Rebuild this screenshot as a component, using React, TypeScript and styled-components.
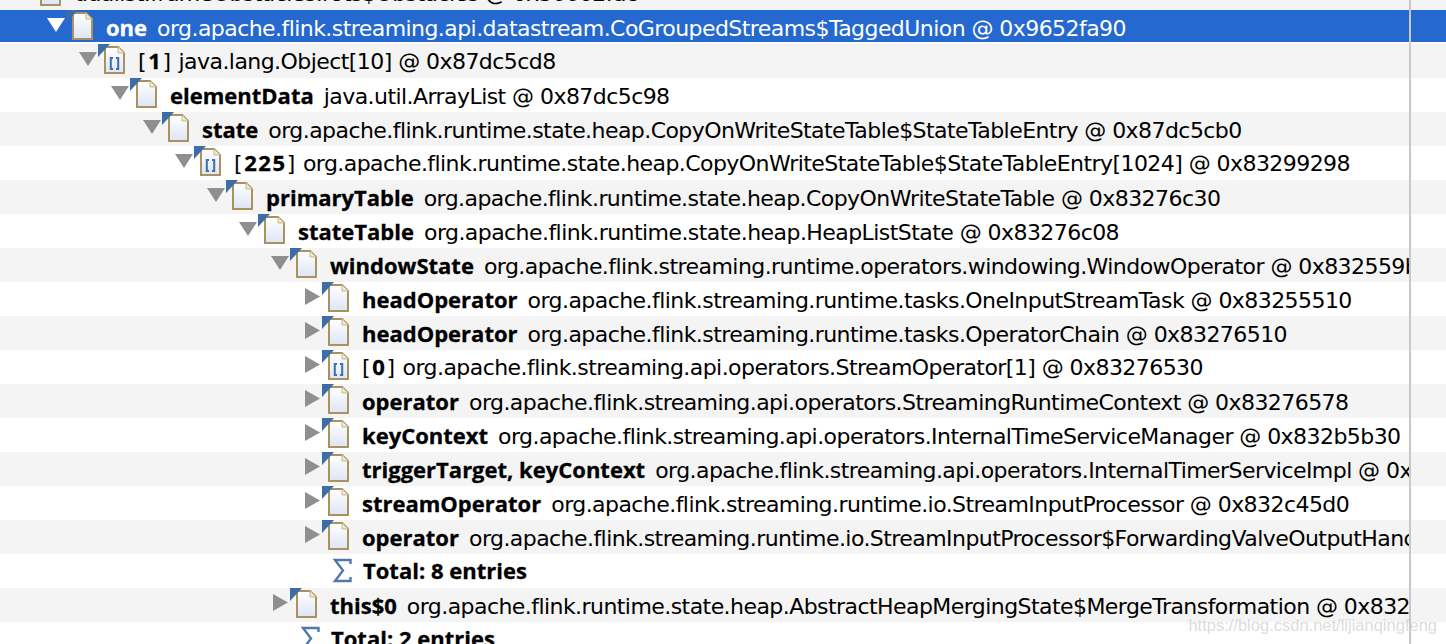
import * as React from 'react'
import styled, { createGlobalStyle } from 'styled-components'

const Global = createGlobalStyle`
  html, body {
    margin: 0;
    height: 644px;
    overflow: hidden;
    background: #fff;
  }
`

const Tree = styled.div`
  position: relative;
  width: 1446px;
  height: 644px;
  overflow: hidden;
  font-family: 'DejaVu Sans', sans-serif;
  font-size: 22px;
  color: #000;
`

const Row = styled.div<{ $h: number; $bg: string; $mb?: number; $clip?: boolean }>`
  height: ${p => p.$h}px;
  margin-bottom: ${p => p.$mb || 0}px;
  background: ${p => p.$bg};
  overflow: ${p => (p.$clip ? 'hidden' : 'visible')};
`

const Cell = styled.div<{ $depth: number; $sel?: boolean; $pull?: number }>`
  box-sizing: border-box;
  display: flex;
  align-items: center;
  width: 1411px;
  height: 34px;
  margin-top: ${p => p.$pull || 0}px;
  padding-left: ${p => 46 + p.$depth * 32}px;
  border-right: 2px solid #c8c8c8;
  overflow: hidden;
  white-space: nowrap;
  color: ${p => (p.$sel ? '#fff' : '#000')};
`

const Arrow = styled.svg`
  flex: none;
  width: 24px;
  height: 18px;
  margin-top: -4px;
`

const Spacer = styled.span`
  flex: none;
  width: 30px;
`

const FileIcon = styled.svg`
  flex: none;
  width: 28px;
  height: 30px;
  margin: -4px 12px 0 -4px;
`

const Sigma = styled.svg`
  flex: none;
  width: 20px;
  height: 25px;
  margin: -2px 11px 0 0;
`

const Label = styled.span<{ $lift?: boolean }>`
  display: flex;
  flex: none;
  align-items: baseline;
  margin-top: ${p => (p.$lift ? -3 : 0)}px;
`

const Name = styled.b<{ $array?: boolean }>`
  flex: none;
  margin-right: ${p => (p.$array ? 6 : 10)}px;
  font-family: 'Open Sans', sans-serif;
  font-weight: 700;
  letter-spacing: ${p => (p.$array ? 1.6 : 0)}px;
  -webkit-text-stroke: 0.3px currentColor;
`

const Bracket = styled.span`
  font-family: 'DejaVu Sans', sans-serif;
  font-weight: 400;
  -webkit-text-stroke: 0;
`

const Plain = styled.span`
  flex: none;
  letter-spacing: -0.56px;
`

const Watermark = styled.div`
  position: absolute;
  right: 9px;
  bottom: 9px;
  font-family: 'Liberation Sans', sans-serif;
  font-size: 16.5px;
  color: rgba(190, 190, 190, 0.55);
`

type Node = {
  depth: number
  h: number
  bg: string
  open?: boolean
  kind?: 'file' | 'array' | 'sum'
  name?: string
  value?: string
  sel?: boolean
  mb?: number
  pull?: number
}

const G = '#f4f4f4'
const W = '#ffffff'
const ROWS: Node[] = [
  { depth: -1, h: 10, bg: G, pull: -24, open: true, value: 'dualist.frameObstacles.rots$Obstacles @ 0x36602fa8' },
  { depth: 0, h: 32, bg: '#2468d0', sel: true, open: true, mb: 2, name: 'one', value: 'org.apache.flink.streaming.api.datastream.CoGroupedStreams$TaggedUnion @ 0x9652fa90' },
  { depth: 1, h: 34, bg: G, open: true, kind: 'array', name: '[1]', value: 'java.lang.Object[10] @ 0x87dc5cd8' },
  { depth: 2, h: 34, bg: W, open: true, name: 'elementData', value: 'java.util.ArrayList @ 0x87dc5c98' },
  { depth: 3, h: 34, bg: G, open: true, name: 'state', value: 'org.apache.flink.runtime.state.heap.CopyOnWriteStateTable$StateTableEntry @ 0x87dc5cb0' },
  { depth: 4, h: 34, bg: W, open: true, kind: 'array', name: '[225]', value: 'org.apache.flink.runtime.state.heap.CopyOnWriteStateTable$StateTableEntry[1024] @ 0x83299298' },
  { depth: 5, h: 34, bg: G, open: true, name: 'primaryTable', value: 'org.apache.flink.runtime.state.heap.CopyOnWriteStateTable @ 0x83276c30' },
  { depth: 6, h: 34, bg: W, open: true, name: 'stateTable', value: 'org.apache.flink.runtime.state.heap.HeapListState @ 0x83276c08' },
  { depth: 7, h: 34, bg: G, open: true, name: 'windowState', value: 'org.apache.flink.streaming.runtime.operators.windowing.WindowOperator @ 0x832559b' },
  { depth: 8, h: 34, bg: W, name: 'headOperator', value: 'org.apache.flink.streaming.runtime.tasks.OneInputStreamTask @ 0x83255510' },
  { depth: 8, h: 34, bg: G, name: 'headOperator', value: 'org.apache.flink.streaming.runtime.tasks.OperatorChain @ 0x83276510' },
  { depth: 8, h: 34, bg: W, kind: 'array', name: '[0]', value: 'org.apache.flink.streaming.api.operators.StreamOperator[1] @ 0x83276530' },
  { depth: 8, h: 34, bg: G, name: 'operator', value: 'org.apache.flink.streaming.api.operators.StreamingRuntimeContext @ 0x83276578' },
  { depth: 8, h: 34, bg: W, name: 'keyContext', value: 'org.apache.flink.streaming.api.operators.InternalTimeServiceManager @ 0x832b5b30' },
  { depth: 8, h: 34, bg: G, name: 'triggerTarget, keyContext', value: 'org.apache.flink.streaming.api.operators.InternalTimerServiceImpl @ 0x832' },
  { depth: 8, h: 34, bg: W, name: 'streamOperator', value: 'org.apache.flink.streaming.runtime.io.StreamInputProcessor @ 0x832c45d0' },
  { depth: 8, h: 34, bg: G, name: 'operator', value: 'org.apache.flink.streaming.runtime.io.StreamInputProcessor$ForwardingValveOutputHandler' },
  { depth: 8, h: 34, bg: W, kind: 'sum', name: 'Total: 8 entries' },
  { depth: 7, h: 34, bg: G, name: 'this$0', value: 'org.apache.flink.runtime.state.heap.AbstractHeapMergingState$MergeTransformation @ 0x8322' },
  { depth: 7, h: 22, bg: W, kind: 'sum', name: 'Total: 2 entries' },
]

const Triangle = ({ open, sel }: { open?: boolean; sel?: boolean }) => (
  <Arrow viewBox="0 0 24 18">
    {open
      ? <polygon points="1,2 19,2 10,16" fill={sel ? '#fff' : '#8f8f8f'} />
      : <polygon points="3,0 18,8.5 3,17" fill="#8f8f8f" />}
  </Arrow>
)

const Doc = ({ array }: { array?: boolean }) => (
  <FileIcon viewBox="0 0 28 30">
    <defs>
      <linearGradient id="page" x1="0" y1="0" x2="0" y2="1">
        <stop offset="0" stopColor="#ffffff" />
        <stop offset="1" stopColor="#dde5f5" />
      </linearGradient>
    </defs>
    <path d="M7 3H20L26 9V29H7Z" fill="url(#page)" stroke="#a8935f" strokeWidth="2" />
    <path d="M20 3V9H26" fill="#efe8d4" stroke="#c8b88e" strokeWidth="1" />
    <polygon points="0,0 12,0 0,13" fill="#3d6da6" />
    {array && (
      <path d="M15 14H12.8V25H15M18 14H20.2V25H18" fill="none" stroke="#3f6fa8" strokeWidth="2" />
    )}
  </FileIcon>
)

const SumIcon = () => (
  <Sigma viewBox="0 0 20 25">
    <path d="M18.5 6V2H3L11 12.5L3 23H18.5V19" fill="none" stroke="#4f79ad" strokeWidth="2.4" />
  </Sigma>
)

const NameText = ({ text, array }: { text: string; array?: boolean }) => (
  array
    ? <Name $array><Bracket>[</Bracket>{text.slice(1, -1)}<Bracket>]</Bracket></Name>
    : <Name>{text}</Name>
)

export default function App() {
  return (
    <Tree>
      <Global />
      {ROWS.map((r, i) => (
        <Row key={i} $h={r.h} $bg={r.bg} $mb={r.mb} $clip={i === 0}>
          <Cell $depth={r.depth} $sel={r.sel} $pull={r.pull}>
            {r.kind === 'sum' ? (
              <>
                <Spacer />
                <SumIcon />
              </>
            ) : (
              <>
                <Triangle open={r.open} sel={r.sel} />
                <Doc array={r.kind === 'array'} />
              </>
            )}
            <Label $lift={r.kind === 'array' || r.kind === 'sum'}>
              {r.name && <NameText text={r.name} array={r.kind === 'array'} />}
              {r.value && <Plain>{r.value}</Plain>}
            </Label>
          </Cell>
        </Row>
      ))}
      <Watermark>https://blog.csdn.net/lijianqingfeng</Watermark>
    </Tree>
  )
}
